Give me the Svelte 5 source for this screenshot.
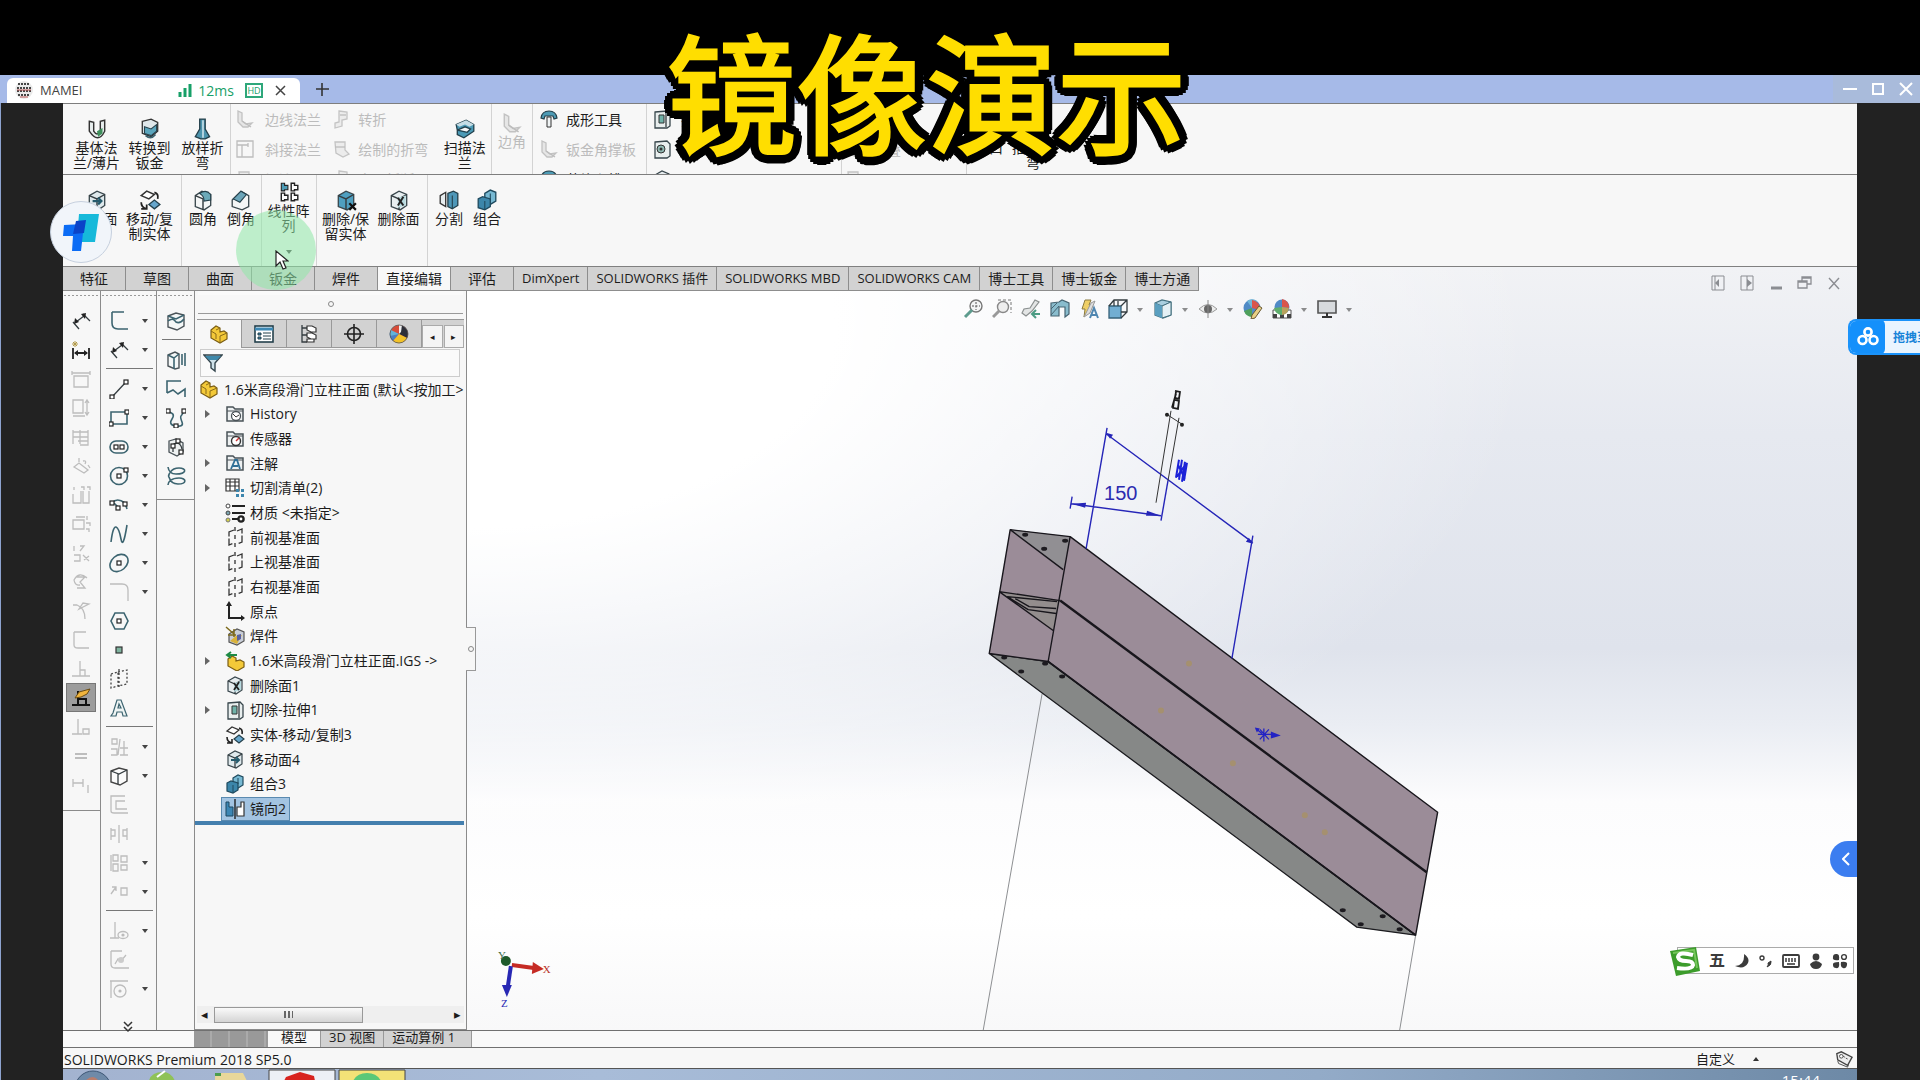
<script>
  const S = 'fill="none" stroke="#343c40" stroke-width="1.3"';
  const G = 'fill="none" stroke="#bdbdbd" stroke-width="1.3"';
  const T = 'fill="none" stroke="#3c6470" stroke-width="1.6"';
  const cube = (f, e = '') =>
    `<path d="M3 6l7-4 7 3v10l-6 4-8-3z" fill="${f}" stroke="#39474d" stroke-width="1.2"/><path d="M3 6l7 3 7-4M10 9v10" ${S}/>${e}`;
  const folder = (e) =>
    `<path d="M2 17V3h6l2 2h8v12z" fill="#eef1f2" stroke="#4a5358" stroke-width="1.5"/><path d="M2 7h16" stroke="#4a5358"/>${e}`;
  const sq = (x, y) => `<rect x="${x - 2}" y="${y - 2}" width="4" height="4" fill="#fff" stroke="#222" stroke-width="1.2"/>`;

  const art = {
    bend: `<path d="M3 3l4 1v8q3 5 6 0V3l4-1v10q-6 12-14 0z" fill="#e8eeee" stroke="#333" stroke-width="1.3"/><path d="M10 12l5-3v5l-4 3z" fill="#3f8f5c"/>`,
    convert: `<path d="M3 3l8-2 6 3v8l-6 5-8-3z" fill="#dfe7ea" stroke="#333" stroke-width="1.2"/><path d="M5 8l6 2 5-4v6l-5 4-6-2z" fill="#5ba6bd" stroke="#27414c"/><path d="M6 16q5 4 9-1" ${T}/>`,
    loft: `<path d="M7 1h5v9l4 7-4 2H8l-5-2 4-7z" fill="#4d94ad" stroke="#24404b" stroke-width="1.2"/><path d="M10 2v16" stroke="#cfe6ee" stroke-width="1.4"/>`,
    sweep: `<path d="M2 6l9-4 7 4v6l-9 6-6-3v-4l9 2 3-3-5-2-7 3z" fill="#4b9ab6" stroke="#22404c" stroke-width="1.2"/><path d="M2 6l9-4 7 4-4 2-4-2-5 2z" fill="#c6dde5"/>`,
    gflange: `<path d="M3 2l4 2v8l4 3 6-1-4 4H8l-5-5z" fill="#e6e6e6" stroke="#c2c2c2" stroke-width="1.3"/><path d="M7 12l9 6" ${G}/>`,
    gmiter: `<path d="M2 2h16v16H2zM2 6h11M7 6v12M13 4v4" ${G}/>`,
    gjog: `<path d="M8 2l8 1v7l-5 1v6l-7 2v-5l4-1z" fill="#ececec" stroke="#c4c4c4" stroke-width="1.3"/><path d="M9 6h6" ${G}/>`,
    gbend: `<path d="M4 3h10v8l4 4-6 3-7-4z" fill="#ececec" stroke="#c4c4c4" stroke-width="1.3"/><path d="M4 8h10" ${G}/>`,
    form: `<path d="M2 9q1-7 8-7t8 7l-3 1-1-3H6l-1 3z" fill="#4d9bb5" stroke="#24404b" stroke-width="1.2"/><path d="M8 8h4v10H8z" fill="#f0f4f5" stroke="#333"/>`,
    vent: cube('#e7edef', '<circle cx="12" cy="11" r="3" fill="#61a1a6" stroke="#333"/>'),
    cut: `<path d="M3 3l12-1 3 3v12l-3 2H3z" fill="#e8eeee" stroke="#39474d" stroke-width="1.3"/><path d="M14 3v15" ${S}/><path d="M7 6h5v8H7z" fill="#6fb2a9" stroke="#333"/>`,
    hole: `<path d="M3 3l12-1 3 3v12l-3 2H3z" fill="#e8eeee" stroke="#39474d" stroke-width="1.3"/><circle cx="9" cy="10" r="4" fill="#8fb8b2" stroke="#333"/><circle cx="9" cy="10" r="1.5" fill="#333"/>`,
    movef: cube('#dfe9ec', '<path d="M6 11h8m-3-3l3 3-3 3" fill="none" stroke="#245a6c" stroke-width="2"/>'),
    moveb: `<path d="M2 6l5-4 7 3-5 4z" fill="#fff" stroke="#333" stroke-width="1.3"/><path d="M9 14l5-4 5 4-5 4z" fill="#66a6cc" stroke="#24404b" stroke-width="1.2"/><path d="M14 3q4 1 3 6M2 12q0 5 5 6M2 18h5v-4" fill="none" stroke="#222" stroke-width="1.6"/>`,
    fillet: `<path d="M3 6l6-4 8 3v10l-6 4-8-3z" fill="#f4f6f6" stroke="#39474d" stroke-width="1.2"/><path d="M3 6l7 3v10" ${S}/><path d="M7 4q6-4 10 1v5l-6 1q0-5-4-7z" fill="#6baab9" stroke="#24404b"/>`,
    chamfer: `<path d="M2 10l8-8 7 4v10l-6 3-9-3z" fill="#f4f6f6" stroke="#39474d" stroke-width="1.2"/><path d="M3 9l7-7 5 3-6 7z" fill="#6ba5b9" stroke="#24404b"/>`,
    pattern: `<path d="M3 2h3v2h3v4H6v1H3z" fill="#4d9bb5" stroke="#222"/><path d="M12 2h3v2h3v4h-3v1h-3zM3 11h3v2h3v4H6v1H3zM12 11h3v2h3v4h-3v1h-3z" fill="#fff" stroke="#222" stroke-width="1.3"/>`,
    delbody: cube('#4f9fc0', '<path d="M13 13l6 6m0-6l-6 6" stroke="#111" stroke-width="2"/>'),
    delface: cube('#e7eef0', '<path d="M9 8l7-2v9l-7 2z" fill="#b7dadf"/><path d="M9 8l5 7m0-8l-5 8" stroke="#222" stroke-width="1.8"/>'),
    split: `<path d="M2 6l5-3v13l-5-3z" fill="#e7edef" stroke="#333" stroke-width="1.2"/><path d="M9 4l5-2 4 2v11l-5 3-4-2z" fill="#4e97b8" stroke="#24404b" stroke-width="1.2"/><path d="M13 6v12" stroke="#24404b"/>`,
    combine: `<path d="M8 4l5-3 5 2v8l-5 3-5-2z" fill="#77b9d3" stroke="#1f4a5e" stroke-width="1.2"/><path d="M2 9l4-2 7 2v7l-5 3-6-2z" fill="#3c86aa" stroke="#1f4a5e" stroke-width="1.2"/><path d="M8 11v8M13 4v6" stroke="#1f4a5e"/>`,
    // dimension and relation tools
    dim: `<path d="M2 11l6 7M12 3l7 7M5 11l8-6" ${S}/><path d="M3 13l1-6 4 4zM15 2l-5 1 4 5z" fill="#222"/>`,
    autodim: `<path d="M2 8v11M18 8v11M4 13h12" fill="none" stroke="#222" stroke-width="1.8"/><path d="M3 13l4-3v6zM17 13l-4-3v6z" fill="#222"/><path d="M4 1v6M1 4h6M2 2l4 4M6 2L2 6" stroke="#b39b4a"/>`,
    g1: `<path d="M1 2v4M19 2v4M1 4h18M3 7h14v11H3z" ${G}/>`,
    g2: `<path d="M2 2h10v13H2zM2 18h12M16 3v13M14 5l2-3 2 3M14 14l2 3 2-3" ${G}/>`,
    g3: `<path d="M2 3v14M9 3v14M17 3v11M2 5h15M2 10h15M7 14h10v4H9" ${G}/>`,
    g4: `<path d="M3 11l5-4 9 7-4 3zM8 2v4M12 5q4-1 2 3M17 9l2 3" ${G}/>`,
    g5: `<path d="M2 9v9h8V6M12 6v12h6V6M3 2v3M10 2h3v3M16 2h3v3" ${G}/>`,
    g6: `<path d="M2 6h11v9H2zM5 3h9M16 2v4M15 9h4v3M15 15h3v3" ${G}/>`,
    g7: `<path d="M3 3v5M9 3h4l-4 5M3 12h6v6H3M12 12l6 6m0-5l-5 4" ${G}/>`,
    g8: `<path d="M16 6q-8-7-13 2 1 6 6 5M6 5h8l-5 5 5 6H6" ${G}/>`,
    g9: `<path d="M2 4h4q8 3 8 14M18 3L8 8l4-6z" ${G}/>`,
    g10: `<path d="M3 2h12M3 2v13q0 3 4 3h11" ${G}/>`,
    g11: `<path d="M9 2v15M1 17h18M9 11h5v6" ${G}/>`,
    g12: `<path d="M7 2v15M1 17h10M12 12h6v5h-6z" ${G}/>`,
    gEq: `<path d="M4 8h12M4 12h12" stroke="#aaa" stroke-width="1.6"/>`,
    gH: `<path d="M2 4v8M12 4v8M2 8h10M17 10v8" ${G}/>`,
    active: `<path d="M1 17h18M7 3v14M8 11h7v6" fill="none" stroke="#111" stroke-width="2"/><path d="M19 1L8 4 4 10l6-1 6-3z" fill="#f0b43c" stroke="#6b4c12"/>`,
    // sketch tools
    sk: `<path d="M3 1v11q0 6 6 6h10M3 1h12" ${T}/>`,
    line: `<path d="M3 18L17 3" ${S}/>${sq(3, 18)}${sq(17, 3)}`,
    rect: `<path d="M2 4h16v12H2z" ${T}/>${sq(2, 16)}${sq(18, 4)}`,
    slot: `<rect x="1" y="4" width="18" height="12" rx="6" ${T}/>${sq(7, 10)}${sq(13, 10)}`,
    circle: `<circle cx="10" cy="10" r="8.5" ${T}/>${sq(10, 10)}${sq(17, 4)}`,
    arc: `<path d="M3 8q5-6 13 0M5 8l5 5M16 8l2 6" ${T}/>${sq(3, 8)}${sq(9, 13)}${sq(16, 9)}`,
    spline: `<path d="M2 18Q4 2 7 3t5 12 6-14" ${T}/>`,
    ellipse: `<ellipse cx="10" cy="10" rx="10" ry="7.5" transform="rotate(-40 10 10)" ${T}/>${sq(10, 10)}`,
    gfil: `<path d="M1 2h12q6 0 6 6v11" ${G}/>`,
    poly: `<path d="M6 2h9l4 8-4 8H6l-4-8z" ${T}/>${sq(10, 10)}`,
    point: `<rect x="7" y="7" width="6" height="6" fill="#7fb39f" stroke="#333" stroke-width="1.2"/>`,
    planeD: `<path d="M2 5l7-2v14l-7 2zM9 3l9-2v14l-9 2M10 0v20" fill="none" stroke="#444" stroke-dasharray="2 2" stroke-width="1.3"/>`,
    text: `<path d="M2 18h5l1-4h5l1 4h4L12 2H8L4 15zM9 10l1-4 2 4z" fill="#eef4f4" stroke="#3c6470" stroke-width="1.2"/>`,
    gtrim: `<path d="M3 2h5v5H3zM2 12h6v6H2M11 2l-2 16M15 4v14M11 11h8M11 18h8" ${G}/>`,
    box: `<path d="M2 5l8-3 8 2v11l-7 4-9-3z" fill="#fafafa" stroke="#444" stroke-width="1.4"/><path d="M2 5l8 3 8-4M9 8v10" ${S}/>`,
    goff: `<path d="M16 1H2v15q0 2 3 2h14M16 6H7v8h11" ${G}/>`,
    gmir: `<path d="M10 1v18M2 4v12M2 6h4v6H2M18 4v12M18 6h-4v6h4" ${G}/>`,
    gpat: `<path d="M2 2v16M4 2h5v6H4zM12 3h6v6h-6zM4 11h5v7H4zM12 12h6v5h-6z" ${G}/>`,
    gmove: `<path d="M2 12l5-7M3 5h4v4M12 6h6v7h-6z" ${G}/>`,
    grel: `<path d="M6 1v16M1 17h9" ${G}/><ellipse cx="14" cy="14" rx="5" ry="3.5" ${G}/><circle cx="14" cy="14" r="1.6" fill="#bbb"/>`,
    gfix: `<path d="M2 1h11M2 1v13q0 4 4 4h14M6 14l3-5 3 2 5-6" ${G}/><circle cx="12" cy="10" r="3" fill="#ccc"/>`,
    gsnap: `<path d="M1 2h18M2 2v17" ${G}/><circle cx="11" cy="12" r="6" ${G}/><circle cx="11" cy="12" r="1.6" fill="#bbb"/>`,
    // surface and curve tools
    surf1: `<path d="M2 5l8-3 8 2v11l-7 4-9-3z" fill="#f4f7f7" stroke="#4a5358" stroke-width="1.4"/><path d="M2 10q5-4 8 1 4 2 8-3M2 5l8 3 8-4" ${T}/>`,
    surf2: `<path d="M2 5l7-3 4 2v14l-4 1-7-3z" fill="#f4f7f7" stroke="#4a5358" stroke-width="1.4"/><path d="M2 5l6 3v11M8 8l5-4M16 4v11M19 3v13" ${T}/>`,
    surf3: `<path d="M1 14V2h14M1 14l6-3 5 4 7-5v8" ${T}/>`,
    surf4: `<path d="M2 4q8 1 4 7t4 7 6-4-1-6 3-5" ${T}/>${sq(2, 3)}${sq(18, 3)}${sq(10, 18)}`,
    surf5: `<path d="M3 4l7-2 7 4v9l-6 4-8-4z" fill="#eef1f1" stroke="#4a5358" stroke-width="1.3"/><path d="M6 8q8-5 10 4M7 8v7" ${S}/>${sq(12, 4)}${sq(7, 9)}${sq(15, 15)}`,
    helix: `<path d="M2 1q1 7 8 7c11 0 11-6 3-6-9 0-11 8-10 9M3 11q2 7 9 7c9 0 9-6 1-6-8 0-11 4-11 7" ${T}/>`,
    // tree
    part: `<path d="M2 6l5-4 4 2v4l4-1 3 2v6l-7 4-9-5z" fill="#f3c938" stroke="#7a5d14" stroke-width="1.2"/><path d="M2 7l5 3v5M7 6l4-2M11 12l7-3M11 12v6" fill="none" stroke="#8a6b18"/>`,
    igs: `<path d="M3 8l4-3 4 2v3l4-1 4 2v5l-7 4-9-5z" fill="#f3c938" stroke="#7a5d14" stroke-width="1.2"/><path d="M12 4H3m3-3L2 4l4 3" fill="none" stroke="#1e8a45" stroke-width="2"/>`,
    props: `<rect x="1" y="2" width="18" height="16" fill="#fff" stroke="#24404b" stroke-width="1.6"/><path d="M1 5h18" stroke="#3d89b5" stroke-width="3"/><path d="M4 9h3v2H4zM4 13h3v2H4z" fill="#3d89b5" stroke="#24404b"/><path d="M9 9h8M9 12h8M9 15h8" stroke="#24404b"/>`,
    config: `<path d="M3 1v17h5M3 4h5M3 11h5" ${S}/><path d="M8 2h5l4 2v4h-5l-4-2zM8 9h5l4 2v4h-5l-4-2zM8 15h7v3H8z" fill="#fff" stroke="#333" stroke-width="1.2"/>`,
    target: `<circle cx="10" cy="10" r="6.5" fill="none" stroke="#222" stroke-width="1.6"/><path d="M10 0v20M0 10h20" stroke="#222" stroke-width="1.6"/>`,
    ball: `<circle cx="10" cy="10" r="9" fill="#d84c39"/><path d="M10 10L4 17a9 9 0 0 1-3-9z" fill="#4d7fc0"/><path d="M10 10L2 6a9 9 0 0 0-1 6z" fill="#63b3d8"/><path d="M10 10V1a9 9 0 0 1 8 13z" fill="#2d2f38"/><path d="M10 10V1h3l-1 7z" fill="#eee"/><path d="M10 10l8 4a9 9 0 0 1-14 3z" fill="#f2c228"/><circle cx="10" cy="10" r="9" fill="none" stroke="#555" stroke-width=".8"/>`,
    filter: `<path d="M1 2h18l-7 8v8l-4-3v-5z" fill="#cfe2ea" stroke="#33454d" stroke-width="1.4"/><path d="M2 3h16l-4 4H6z" fill="#3f89ab"/>`,
    hist: folder('<circle cx="11" cy="12" r="4.5" fill="#fff" stroke="#4a5358" stroke-width="1.3"/><path d="M8 10l3 3 3-2" fill="none" stroke="#333"/>'),
    sensor: folder('<circle cx="11" cy="12" r="4.5" fill="#fff" stroke="#333" stroke-width="1.4"/><path d="M11 12l3-3" stroke="#c33" stroke-width="1.5"/>'),
    annot: folder('<path d="M6 16l4-9h2l3 9M8 13h5" fill="none" stroke="#2f6f96" stroke-width="1.8"/>'),
    cutlist: `<path d="M1 1h13v12H1zM1 4h13M1 8h13M5 1v12M10 1v12" fill="#fff" stroke="#333" stroke-width="1.2"/><path d="M11 11h3v3h-3zM16 11h3v3h-3zM11 16h3v3h-3zM16 16h3v3h-3z" fill="#3d86ad"/>`,
    material: `<circle cx="3" cy="3" r="2" fill="#fff" stroke="#444"/><circle cx="3" cy="10" r="2" fill="#7ba5b0" stroke="#444"/><circle cx="3" cy="17" r="2" fill="#d3d14b" stroke="#777"/><path d="M7 3h13M7 10h13M7 16h6" stroke="#222" stroke-width="1.8"/><circle cx="16" cy="16" r="2.6" fill="#fff" stroke="#222" stroke-width="2.4"/>`,
    plane: `<path d="M9 3L4 5v13l5-2M12 4l5-2v13l-5 2" fill="none" stroke="#333" stroke-width="1.3" stroke-dasharray="10 2"/><path d="M10 0v4M10 8v4M10 16v4" fill="none" stroke="#333" stroke-width="1.3"/>`,
    origin: `<path d="M4 2v15h14" fill="none" stroke="#222" stroke-width="2"/><path d="M4 0l3 5H1zM20 17l-4-3v6z" fill="#222"/>`,
    weld: `<path d="M4 8l8-5 7 3v9l-7 4-8-3z" fill="#c9ced8" stroke="#555" stroke-width="1.2"/><path d="M1 1l8 7M9 3v8M3 9h8" stroke="#7d6a1b" stroke-width="1.5"/><path d="M5 15l7 3 5-9-6 1z" fill="#d9b23a"/><path d="M12 9l4-1v5l-4 2z" fill="#5a62a0"/>`,
    mirror: `<path d="M1 3h3v5h4v9H1z" fill="#3c86b4" stroke="#1c4761"/><path d="M10 0v20" stroke="#222" stroke-width="1.4"/><path d="M19 3h-3v5h-4v9h7z" fill="#fff" stroke="#333" stroke-width="1.2"/>`,
    // view tools
    zoomfit: `<circle cx="13" cy="7" r="6" fill="#f4f6f7" stroke="#777" stroke-width="1.4"/><path d="M13 3v8M9 7h8" stroke="#555" stroke-dasharray="2 1.5"/><path d="M9 11l-7 7" stroke="#5e9c8e" stroke-width="3"/>`,
    zoomarea: `<path d="M6 1h13v13" fill="none" stroke="#777" stroke-dasharray="3 2"/><circle cx="11" cy="8" r="5.5" fill="#eee" stroke="#888" stroke-width="1.4"/><path d="M7 12l-6 6" stroke="#999" stroke-width="3"/>`,
    prev: `<path d="M14 1l4 2-7 9-6 5-4-3 2-4 6-1z" fill="#e3e5e5" stroke="#8a8f8f" stroke-width="1.2"/><path d="M19 15h-7m3-4l-4 4 4 4" fill="none" stroke="#4c9c84" stroke-width="2"/>`,
    section: `<path d="M1 4l8-1 3-2 7 3v11l-4 3V8H9v9H1z" fill="#89bccd" stroke="#466472" stroke-width="1.2"/><path d="M1 10l6-6M1 16l8-9" stroke="#466472"/>`,
    annview: `<path d="M6 1h6l-2 5 4 1-9 11 1-8H3z" fill="#efcf66" stroke="#8a7a40"/><path d="M12 4l4-2-5 12-6 4z" fill="#ddd" stroke="#999"/><path d="M11 19l4-10 4 10M12 16h6" fill="none" stroke="#4f86b0" stroke-width="2"/>`,
    orient: `<path d="M1 7h12v12H1z" fill="#72aed2" stroke="#36627a" stroke-width="1.3"/><path d="M1 7l5-6h13v12l-6 6M13 7l6-6M6 1v6M13 13h6M10 2v5" ${S}/>`,
    display: `<path d="M2 4l7-3 9 2v13l-8 3-8-3z" fill="#a9cfe0" stroke="#44707f" stroke-width="1.2"/><path d="M2 4l7 3v12M9 7l9-4" fill="none" stroke="#44707f"/><path d="M9 7l9-4v13l-9 3z" fill="#e4f0f5" stroke="#44707f"/><path d="M2 4l7 3v12l-7-3z" fill="#5a9fc0"/>`,
    eye: `<path d="M1 10q9-9 18 0-9 8-18 0z" fill="#eceded" stroke="#9a9a9a"/><circle cx="10" cy="10" r="4" fill="#666"/><path d="M10 1v18" stroke="#888"/>`,
    appear: `<circle cx="9" cy="9" r="8.5" fill="#4f8ac6"/><path d="M9 9L4 2a9 9 0 0 1 10 0z" fill="#71b7d8"/><path d="M9 9V1a9 9 0 0 1 8 10z" fill="#d9564c"/><path d="M9 9l-8 3a9 9 0 0 0 8 6z" fill="#4fa05c"/><path d="M19 9l-7 10-4 1 1-4 7-9z" fill="#e8cf85" stroke="#6b5a33"/>`,
    scene: `<path d="M1 11h18v8H1z" fill="#fff" stroke="#555"/><path d="M1 15h4v4H1zM8 15h4v4H8zM15 15h4v4h-4z" fill="#444"/><circle cx="10" cy="8" r="7.5" fill="#4f8ac6"/><path d="M10 8V0a8 8 0 0 1 7 9z" fill="#d9564c"/><path d="M10 8l-8 1a8 8 0 0 0 8 7z" fill="#5fae6c"/><path d="M10 8v8a8 8 0 0 0 7-7z" fill="#b8a25c"/>`,
    monitor: `<path d="M1 2h18v12H1z" fill="#d7dadd" stroke="#555" stroke-width="1.6"/><path d="M10 14v4M5 18h10" stroke="#333" stroke-width="2"/>`,
    tag: `<path d="M2 4l5-2 12 6-5 9L3 11z" fill="#eee" stroke="#444" stroke-width="1.5"/><path d="M3 12l1 3 10 4 1-3M7 6l4 2M12 9l2 1" stroke="#444" fill="none"/><circle cx="7" cy="7" r="2" fill="#fff" stroke="#444"/>`,
  };

  const tabs = ['特征', '草图', '曲面', '钣金', '焊件', '直接编辑', '评估', 'DimXpert', 'SOLIDWORKS 插件', 'SOLIDWORKS MBD', 'SOLIDWORKS CAM', '博士工具', '博士钣金', '博士方通'];

  const dims = ['dim', 'autodim', 'g1', 'g2', 'g3', 'g4', 'g5', 'g6', 'g7', 'g8', 'g9', 'g10', 'g11', 'active', 'g12', 'gEq', 'gH'];

  const sketch = [
    [['sk', 1], ['dim', 1]],
    [['line', 1], ['rect', 1], ['slot', 1], ['circle', 1], ['arc', 1], ['spline', 1], ['ellipse', 1], ['gfil', 1], ['poly', 0], ['point', 0], ['planeD', 0], ['text', 0]],
    [['gtrim', 1], ['box', 1], ['goff', 0], ['gmir', 0], ['gpat', 1], ['gmove', 1]],
    [['grel', 1], ['gfix', 0], ['gsnap', 1]],
  ];
  const curves = [['surf1'], ['surf2', 'surf3', 'surf4', 'surf5', 'helix']];

  const tree = [
    ['hist', 'History', 1], ['sensor', '传感器', 0], ['annot', '注解', 1], ['cutlist', '切割清单(2)', 1],
    ['material', '材质 <未指定>', 0], ['plane', '前视基准面', 0], ['plane', '上视基准面', 0], ['plane', '右视基准面', 0],
    ['origin', '原点', 0], ['weld', '焊件', 0], ['igs', '1.6米高段滑门立柱正面.IGS ->', 1], ['delface', '删除面1', 0],
    ['cut', '切除-拉伸1', 1], ['moveb', '实体-移动/复制3', 0], ['movef', '移动面4', 0], ['combine', '组合3', 0], ['mirror', '镜向2', 0],
  ];
  let selected = $state('镜向2');

  const view = [['zoomfit', 0], ['zoomarea', 0], ['prev', 0], ['section', 0], ['annview', 0], ['orient', 1], ['display', 1], ['eye', 1], ['appear', 0], ['scene', 1], ['monitor', 1]];

  const holes = [[1025, 534], [1044, 548], [1065, 540], [1004, 657], [1021, 671], [1045, 663], [1062, 676], [1343, 910], [1361, 924], [1383, 916], [1400, 929]];
  const marks = [[1189, 663], [1161, 710], [1233, 763], [1305, 815], [1325, 832]];
</script>

{#snippet icon(name, size = 20)}
  <svg class="ic" width={size} height={size} viewBox="0 0 20 20" aria-hidden="true">{@html art[name]}</svg>
{/snippet}

{#snippet big(name, lines, cls = '')}
  <button class="big {cls}">
    {@render icon(name, 22)}
    {#each lines as l}<span>{l}</span>{/each}
  </button>
{/snippet}

{#snippet small(name, label, cls = '')}
  <button class="small {cls}">{@render icon(name)}<span>{label}</span></button>
{/snippet}

<div class="page">
  <div class="letterbox"></div>

  <header class="strip">
    <div class="conn">
      <svg class="ic" width="18" height="18" viewBox="0 0 18 18"><circle cx="9" cy="9" r="9" fill="#e9e9e9" /><path d="M3 3h12M2 7h14M2 10h14M3 14h12" stroke="#444" stroke-width="2" stroke-dasharray="2 1" /><path d="M2 9h14M5 16h8" stroke="#b55" /></svg>
      <span class="host">MAMEI</span>
      <svg class="ic" width="14" height="13" viewBox="0 0 14 13"><path d="M2 8v5M7 4v9M12 0v13" stroke="#17a068" stroke-width="3" /></svg>
      <span class="ping">12ms</span>
      <span class="hd">HD</span>
      <button class="plain" aria-label="关闭标签"><svg width="11" height="11" viewBox="0 0 11 11"><path d="M1 1l9 9M10 1l-9 9" stroke="#444" stroke-width="1.5" /></svg></button>
    </div>
    <button class="plain add" aria-label="新建标签"><svg width="13" height="13" viewBox="0 0 13 13"><path d="M6 0v13M0 6h13" stroke="#333" stroke-width="1.6" /></svg></button>
    <div class="win">
      <button class="plain" aria-label="最小化"><svg width="14" height="14" viewBox="0 0 14 14"><path d="M0 7h14" stroke="#fff" stroke-width="2" /></svg></button>
      <button class="plain" aria-label="最大化"><svg width="14" height="14" viewBox="0 0 14 14"><path d="M2 2h10v10H2z" fill="none" stroke="#fff" stroke-width="2" /></svg></button>
      <button class="plain" aria-label="关闭"><svg width="14" height="14" viewBox="0 0 14 14"><path d="M1 1l12 12M13 1L1 13" stroke="#fff" stroke-width="2" /></svg></button>
    </div>
  </header>

  <div class="remote">
    <main class="app">
      <section class="ribbon one">
        <div class="group w168">
          {@render big('bend', ['基体法', '兰/薄片'])}
          {@render big('convert', ['转换到', '钣金'])}
          {@render big('loft', ['放样折', '弯'])}
        </div>
        <div class="group w261">
          <div class="stack w97">
            {@render small('gflange', '边线法兰', 'off')}
            {@render small('gmiter', '斜接法兰', 'off')}
            {@render small('gbend', '褶边', 'off')}
          </div>
          <div class="stack w108">
            {@render small('gjog', '转折', 'off')}
            {@render small('gbend', '绘制的折弯', 'off')}
            {@render small('gjog', '交叉折断', 'off')}
          </div>
          {@render big('sweep', ['扫描法', '兰'])}
        </div>
        <div class="group w41">{@render big('gflange', ['边角'], 'off up')}</div>
        <div class="group w114">
          <div class="stack">
            {@render small('form', '成形工具')}
            {@render small('gflange', '钣金角撑板', 'off')}
            {@render small('form', '薄片和槽口')}
          </div>
        </div>
        <div class="group w195">
          <div class="stack">
            {@render small('cut', '拉伸切除')}
            {@render small('hole', '简单直孔')}
            {@render small('vent', '通风口')}
          </div>
        </div>
        <div class="group w125">
          <div class="stack">
            {@render small('gbend', '展开', 'off')}
            {@render small('gbend', '折叠', 'off')}
            {@render small('gbend', '展平', 'off')}
          </div>
        </div>
        <div class="group last">
          {@render big('cut', ['切口'])}
          {@render big('bend', ['插入折', '弯'])}
        </div>
      </section>

      <section class="ribbon two">
        <div class="group w119">
          {@render big('movef', ['移动面'])}
          {@render big('moveb', ['移动/复', '制实体'])}
        </div>
        <div class="group w80 tight">
          {@render big('fillet', ['圆角'])}
          {@render big('chamfer', ['倒角'])}
        </div>
        <div class="group w55">{@render big('pattern', ['线性阵', '列'], 'up drop')}</div>
        <div class="group w111">
          {@render big('delbody', ['删除/保', '留实体'])}
          {@render big('delface', ['删除面'])}
        </div>
        <div class="group last tight">
          {@render big('split', ['分割'])}
          {@render big('combine', ['组合'])}
        </div>
      </section>

      <div class="stage">
        <div class="tabrow">
          <nav class="tabs">
            {#each tabs as t}<button class:on={t === '直接编辑'} class:latin={/[A-Z]/.test(t)}>{t}</button>{/each}
          </nav>
          <div class="mdi">
            <button class="plain" aria-label="左窗格"><svg width="16" height="16" viewBox="0 0 16 16"><path d="M2 1h12v14H2zM5 1v14" fill="none" stroke="#8b8d92" /><path d="M9 4v8L5 8z" fill="#8b8d92" /></svg></button>
            <button class="plain" aria-label="右窗格"><svg width="16" height="16" viewBox="0 0 16 16"><path d="M2 1h12v14H2zM8 1v14" fill="none" stroke="#8b8d92" /><path d="M8 4v8l5-4z" fill="#8b8d92" /></svg></button>
            <button class="plain" aria-label="最小化文档"><svg width="16" height="16" viewBox="0 0 16 16"><path d="M3 13h11" stroke="#8b8d92" stroke-width="3" /></svg></button>
            <button class="plain" aria-label="还原文档"><svg width="16" height="16" viewBox="0 0 16 16"><path d="M1 6h9v7H1zM5 6V2h9v7h-4M5 3h9M1 7h9" fill="none" stroke="#8b8d92" stroke-width="1.3" /></svg></button>
            <button class="plain" aria-label="关闭文档"><svg width="16" height="16" viewBox="0 0 16 16"><path d="M3 3l10 11M13 3L3 14" stroke="#8b8d92" stroke-width="1.4" /></svg></button>
          </div>
        </div>

        <div class="work">
          <div class="rail"><div class="bar b1">
            {#each dims as d}<button class="tool" class:active={d === 'active'} aria-label={d}>{@render icon(d)}</button>{/each}
          </div></div>
          <div class="rail wide"><div class="bar b2">
            {#each sketch as g}
              <div class="set">
                {#each g as [n, more]}
                  <button class="tool" class:more aria-label={n}>{@render icon(n)}</button>
                {/each}
              </div>
            {/each}
            <button class="tool end" aria-label="更多"><svg width="10" height="12" viewBox="0 0 10 12"><path d="M1 1l4 4 4-4M1 6l4 4 4-4" fill="none" stroke="#333" stroke-width="1.5" /></svg></button>
          </div></div>
          <div class="rail"><div class="bar b3">
            {#each curves as g}
              <div class="set">
                {#each g as n}<button class="tool" aria-label={n}>{@render icon(n)}</button>{/each}
              </div>
            {/each}
          </div></div>

          <aside class="panel">
            <div class="grip"><i></i></div>
            <div class="ptabs">
              <button class="on" aria-label="设计树">{@render icon('part')}</button>
              <button aria-label="属性">{@render icon('props')}</button>
              <button aria-label="配置">{@render icon('config')}</button>
              <button aria-label="尺寸专家">{@render icon('target')}</button>
              <button aria-label="外观">{@render icon('ball')}</button>
              <div class="pager"><button aria-label="向左">◂</button><button aria-label="向右">▸</button></div>
            </div>
            <div class="filter">{@render icon('filter')}<input aria-label="过滤" /></div>
            <ul class="tree">
              <li class="root">{@render icon('part')}<span>1.6米高段滑门立柱正面 (默认&lt;按加工&gt;</span></li>
              {#each tree as [n, label, open]}
                <li>
                  <i class:tri={open}></i>
                  <button class:sel={selected === label} onclick={() => (selected = label)}>{@render icon(n)}<span>{label}</span></button>
                </li>
              {/each}
            </ul>
            <div class="rollback"></div>
            <div class="hscroll"><b>◂</b><div class="track"><div class="thumb"></div></div><b>▸</b></div>
            <div class="splitter"><i></i></div>
          </aside>

          <div class="canvas">
            <svg class="scene" viewBox="467 290 1390 740" preserveAspectRatio="xMidYMid meet" aria-label="模型视图">
              <path d="M1042 693L983 1030M1416 935l-16 95" stroke="#8d8f92" fill="none" />
              <path d="M989 653l59 8 368 274-59-8z" fill="#868887" stroke="#1b1b1f" stroke-width="1.3" />
              <path d="M1010 529l60 7 368 276-22 123-368-274-59-8z" fill="#9b8c98" />
              <path d="M1010 529l60 7-7 33z" fill="#918f93" />
              <path d="M999 591l61 9-7 30z" fill="#938d8d" />
              <g fill="none" stroke="#18161c" stroke-width="1.4" stroke-linejoin="round">
                <path d="M1010 529l60 7-22 125-59-8zM1070 536l368 276-22 123-368-274" />
                <path d="M1010 529l53 40M999 591l61 9M1007 596l50 5M999 591l54 39M1007 596l21 13 28 4M1015 598l14 8 27 2" />
                <path d="M1060 600l367 272" stroke-width="2.4" />
                <path d="M1048 661l368 274" stroke-width="1.8" />
              </g>
              {#each holes as [x, y]}<ellipse cx={x} cy={y} rx="3" ry="2" fill="#1d1b20" />{/each}
              {#each marks as [x, y]}<circle cx={x} cy={y} r="3" fill="#a5906f" />{/each}
              <g fill="none" stroke="#2525b8" stroke-width="1.4">
                <path d="M1107 427l-21 121M1106 433l147 109M1253 535l-21 123M1071 503l90 12M1072 496l-2 12" />
                <path d="M1168 480l-7 40" />
              </g>
              <path d="M1106 432l7 2-3 4zM1253 543l-7-2 3-4zM1072 503l14-1-1 5zM1161 515l-14-5-1 5z" fill="#2525b8" />
              <path d="M1171 410l-15 92M1179 417l-11 63M1166 413l17 11" fill="none" stroke="#333" />
              <circle cx="1167" cy="414" r="2" fill="#222" /><circle cx="1182" cy="424" r="2" fill="#222" />
              <path d="M1175 390l5 1-1 7-4-1 1-6m-1 8l4 1-1 8-5-1 1-7m2-7l-4 14" fill="none" stroke="#1c1c1c" stroke-width="1.8" />
              <path d="M1179 459l-3 18M1182 459l-3 20M1185 461l-3 20M1187 462l-3 18M1177 476l9-13M1178 464l7 14" fill="none" stroke="#1c22d8" stroke-width="2" />
              <text class="dimtext" x="1104" y="499">150</text>
              <path d="M1258 734h14M1264 728v13M1260 729l9 10M1269 729l-9 10M1256 728l6 5" stroke="#2222c4" stroke-width="1.3" />
              <path d="M1271 731l10 4-10 3zM1255 727l5 1-3 4z" fill="#2222c4" />
              <g class="triad">
                <path d="M511 965l22 3" stroke="#c52b24" stroke-width="4" /><path d="M532 962l11 7-12 5z" fill="#c52b24" />
                <path d="M510 966l-3 20" stroke="#2828b4" stroke-width="4" /><path d="M501 985h10l-5 12z" fill="#2828b4" />
                <circle cx="505" cy="961" r="5" fill="#1e5a2b" />
                <text x="542" y="973" fill="#b8322c">X</text><text x="500" y="1007" fill="#2828b4">Z</text><text x="497" y="959" fill="#3a6b45">Y</text>
              </g>
            </svg>
            <div class="headsup">
              {#each view as [n, more]}<button class="plain" class:more aria-label={n}>{@render icon(n)}</button>{/each}
            </div>
            <button class="expand" aria-label="展开侧栏"><svg width="8" height="14" viewBox="0 0 8 14"><path d="M7 1L1 7l6 6" fill="none" stroke="#fff" stroke-width="2" /></svg></button>
            <div class="ime">
              <svg class="sogou" width="32" height="30" viewBox="0 0 32 30"><path d="M1 5l26-4 4 24-24 5z" fill="#3c9c2b" /><path d="M4 7l21-3 3 18" fill="none" stroke="#74c55a" stroke-width="2" /><path d="M24 9q-14-4-15 2 1 4 8 4 7 0 7 4-1 5-16 3" fill="none" stroke="#fff" stroke-width="4" /></svg>
              <span>五</span>
              <svg width="16" height="16" viewBox="0 0 16 16"><path d="M10 1q6 4 4 9-4 7-13 3 10 0 9-12z" fill="#3b3b3b" /></svg>
              <svg width="14" height="16" viewBox="0 0 14 16"><circle cx="3" cy="5" r="2" fill="none" stroke="#3b3b3b" stroke-width="1.4" /><path d="M12 8q1 4-4 6 2-2 1-4z" fill="#3b3b3b" stroke="#3b3b3b" /></svg>
              <svg width="18" height="14" viewBox="0 0 18 14"><rect x="1" y="1" width="16" height="12" rx="1" fill="none" stroke="#3b3b3b" stroke-width="1.8" /><path d="M3 5h12M3 7h12" stroke="#3b3b3b" stroke-width="1.6" stroke-dasharray="2 1" /><path d="M5 10h8" stroke="#3b3b3b" stroke-width="1.6" /></svg>
              <svg width="14" height="16" viewBox="0 0 14 16"><circle cx="7" cy="4" r="3.4" fill="#3b3b3b" /><path d="M1 11q6-6 12 0-1 5-6 5t-6-5z" fill="#3b3b3b" /></svg>
              <svg width="16" height="16" viewBox="0 0 16 16"><path d="M4 1q4-1 3 6-7 1-6-3 0-3 3-3zM1 12q-1-3 6-3 1 7-3 6-3 0-3-3zM9 9q7-1 6 3-1 4-4 3t-2-6z" fill="#3b3b3b" /><circle cx="12" cy="4" r="2.4" fill="none" stroke="#3b3b3b" stroke-width="1.4" /></svg>
            </div>
          </div>
        </div>
      </div>

      <nav class="doctabs">
        <div class="nub"></div>
        <button class="on">模型</button><button>3D 视图</button><button>运动算例 1</button>
      </nav>
      <footer class="status">
        <span>SOLIDWORKS Premium 2018 SP5.0</span>
        <span class="custom">自定义</span><b></b>{@render icon('tag', 18)}
      </footer>
      <div class="taskbar">
        <svg width="354" height="12" viewBox="0 0 354 12" aria-hidden="true">
          <circle cx="30" cy="20" r="18" fill="#6f8aa8" stroke="#3f5876" /><path d="M22 12q8-8 14 0z" fill="#b97d6c" />
          <path d="M86 12q2-9 14-9 8 0 12 9z" fill="#8fc257" /><path d="M94 8l8-6" stroke="#fff" stroke-width="2" />
          <path d="M152 12V4h28l4 8z" fill="#e8d79a" /><path d="M152 4h6v3h-6z" fill="#4c9c4c" />
          <path d="M206 1h66v11h-66z" fill="#edf0f6" stroke="#444" /><path d="M221 12l2-4 14-5 14 4 1 5z" fill="#d8231f" />
          <path d="M276 1h66v11h-66z" fill="#f3e277" stroke="#444" /><path d="M290 12q4-8 14-8t14 8z" fill="#5bc878" />
        </svg>
        <time>15:44</time>
      </div>
    </main>
  </div>

  <div class="float">
    <svg width="38" height="38" viewBox="0 0 38 38"><path d="M17 1h20l-4 28H19l2-15-5-1z" fill="#16b9da" /><path d="M2 12l20-1-3 27H10l1-15H1z" fill="#0b6cf5" /><path d="M14 8l10-1-2 13-11 1z" fill="#0a43c8" /></svg>
  </div>
  <div class="halo"></div>
  <svg class="cursor" width="14" height="20" viewBox="0 0 14 20"><path d="M1 1v15l4-4 3 7 3-1-3-7h5z" fill="#fff" stroke="#222" stroke-width="1.2" /></svg>
  <div class="drag">
    <span><svg width="22" height="20" viewBox="0 0 22 20"><g fill="none" stroke="#fff" stroke-width="2.6"><circle cx="11" cy="5" r="3.6" /><circle cx="5.500" cy="13" r="4" /><circle cx="16.500" cy="13" r="4" /></g></svg></span>
    <em>拖拽至此上传</em>
  </div>
  <h1>镜像演示</h1>
</div>

<style>
  :global(body) { background: #000; overflow: hidden; }
  .page { position: relative; display: flex; flex-direction: column; height: 100vh; overflow: hidden; background: #222; color: #1c1c1c; font: 14px/15px "Open Sans", "Noto Sans CJK SC", sans-serif; }
  .page * { box-sizing: border-box; }
  button { font: inherit; color: inherit; background: none; border: 0; padding: 0; margin: 0; }
  svg { display: block; flex: none; }
  .plain { display: grid; place-items: center; }
  .letterbox { height: 75px; background: #000; flex: none; }

  .strip { display: flex; align-items: stretch; height: 28px; flex: none; background: #a6bae8; }
  .conn { display: flex; align-items: center; width: 293px; margin: 3px 0 0 7px; padding: 0 14px 1px 8px; background: #fff; border-radius: 6px 6px 0 0; font-size: 13px; color: #444; }
  .host { margin: 0 auto 0 7px; }
  .ping { margin-left: 6px; color: #17a068; font-size: 14px; }
  .hd { margin: 0 12px 0 11px; width: 18px; border: 2px solid #2ea77a; color: #17a068; font-size: 9px; line-height: 11px; text-align: center; }
  .add { margin-left: 15px; width: 14px; }
  .win { display: flex; gap: 14px; margin-left: auto; padding: 0 7px 0 10px; background: #a9bbdb; }

  .remote { flex: 1; min-height: 0; padding: 0 63px 0 62px; border-left: 1px solid #8ea3cf; background: #222; }
  .app { display: flex; flex-direction: column; height: 100%; background: #f7f7f7; }
  .ribbon { display: flex; flex: none; overflow: hidden; border-top: 1px solid #7e7e7e; background: #f7f7f7; }
  .one { height: 71px; }
  .two { height: 92px; }
  .group { display: flex; border-right: 1px solid #d3d3d3; padding-left: 7px; flex: none; }
  .last { border: 0; }
  .one .last { padding-left: 0; }
  .one .last .big { width: 44px; }
  .w168 { width: 168px; } .w261 { width: 261px; padding-left: 4px; } .w41 { width: 41px; padding: 0; } .w114 { width: 114px; padding-left: 6px; }
  .w195 { width: 195px; padding-left: 5px; } .w125 { width: 125px; padding-left: 2px; }
  .w119 { width: 119px; } .w80 { width: 80px; } .w55 { width: 55px; padding: 0; } .w111 { width: 111px; padding-left: 2px; }
  .big { display: flex; flex-direction: column; align-items: center; width: 53px; padding-top: 14px; white-space: nowrap; }
  .one .big.up { width: 40px; padding-top: 8px; }
  .two .big.up { padding-top: 6px; }
  .tight { padding-left: 2px; }
  .tight .big { width: 38px; }
  .drop::after { content: ""; margin-top: 17px; border: 3px solid transparent; border-top: 4px solid #444; border-bottom: 0; }
  .stack { display: flex; flex-direction: column; }
  .w97 { width: 97px; } .w108 { width: 108px; }
  .small { display: flex; align-items: center; gap: 9px; height: 30px; flex: none; white-space: nowrap; }
  .w97 .small { gap: 10px; }
  .w108 .small, .w114 .small { gap: 7px; }
  .off { color: #bcbcbc; }

  .stage { display: flex; flex-direction: column; flex: 1; min-height: 0; border-top: 1px solid #808080;
    background: radial-gradient(ellipse 60% 75% at 22% 8%, #fff 35%, transparent 100%), linear-gradient(#f1f2f5 0, #e6e9f0 22%, #dfe3ec 50%, #eaedf3 60%, #fcfcfd 70%, #fff 85%, #f8f8f9 100%); }
  .tabrow { display: flex; align-items: flex-end; height: 24px; flex: none; }
  .tabs { display: flex; height: 24px; border-bottom: 1px solid #8d8d8d; }
  .tabs button { min-width: 63px; padding: 0 8px 1px; background: #d2d2d2; border-right: 1px solid #8d8d8d; white-space: nowrap; }
  .tabs button.latin { font-size: 13px; }
  .tabs button.on { background: #f8f8f8; }
  .mdi { display: flex; gap: 13px; margin-left: auto; margin-right: 15px; }

  .work { display: flex; flex: 1; min-height: 0; }
  .rail { width: 37px; flex: none; background: #f7f7f7; }
  .rail.wide { width: 57px; }
  .bar { display: flex; flex-direction: column; align-items: stretch; padding-top: 15px; border: solid #8b8b8b; border-width: 0 0 1px; background: radial-gradient(circle, #999 1px, transparent 1px) 0 2px / 4px 5px repeat-x; }
  .b1 { padding-bottom: 11px; }
  .b2 { border-width: 0 1px 1px; }
  .b3 { padding-bottom: 9px; }
  .tool { position: relative; display: grid; place-items: center; height: 29px; flex: none; }
  .b1 .tool { width: 30px; margin-left: 3px; }
  .b2 .tool { width: 36px; }
  .b3 .tool { width: 37px; }
  .active { background: #9c9c9c; border: 1px solid #777; }
  .set + .set { border-top: 1px solid #777; margin: 4px 3px 0 5px; padding-top: 5px; }
  .b2 .set + .set .tool { margin-left: -5px; }
  .b3 .set + .set .tool { margin-left: -5px; }
  .more::after { content: ""; position: absolute; left: 41px; top: 13px; border: 3px solid transparent; border-top: 4px solid #444; border-bottom: 0; }
  .b2 .end { width: 54px; height: 37px; padding-top: 10px; }

  .panel { position: relative; display: flex; flex-direction: column; width: 273px; flex: none; background: #f7f7f7; border: 1px solid #8b8b8b; border-top: 0; }
  .grip { height: 23px; margin: 0 3px; border-top: 4px solid #fafafa; border-bottom: 1px solid #9a9a9a; display: grid; place-items: center; }
  .grip i, .splitter i { width: 6px; height: 6px; border: 1px solid #888; border-radius: 50%; }
  .ptabs { display: flex; height: 29px; margin: 5px 2px 0; border-top: 1px solid #999; }
  .ptabs > button { display: grid; place-items: center; width: 45px; background: #d2d2d2; border: solid #999; border-width: 0 1px 1px 0; }
  .ptabs > button.on { background: #f7f7f7; border-bottom: 0; }
  .pager { display: flex; flex: 1; padding-top: 5px; background: #d2d2d2; gap: 1px; }
  .pager button { flex: 1; background: #f4f4f4; border: 1px solid #aaa; font-size: 9px; line-height: 9px; }
  .filter { display: flex; align-items: center; height: 28px; margin: 1px 6px 0 5px; padding-left: 2px; border: 1px solid #ccc; background: #fafafa; }
  .filter input { flex: 1; min-width: 0; border: 0; background: none; outline: 0; }
  .tree { display: grid; grid-auto-rows: 1fr; height: 444px; margin: 0; padding: 0; list-style: none; flex: none; }
  .tree li { display: flex; align-items: center; white-space: nowrap; min-height: 0; }
  .tree .root { gap: 5px; padding-left: 4px; }
  .tree li > i { width: 26px; }
  .tree li > i.tri::before { content: ""; display: block; margin-left: 10px; width: 0; border: 4px solid transparent; border-left: 5px solid #666; border-right: 0; }
  .tree li button { display: flex; align-items: center; gap: 5px; height: 24px; padding: 0 3px; border: 1px solid transparent; }
  .tree li button.sel { background: #a3c4e2; border-color: #5a8ab0; }
  .rollback { height: 4px; margin-right: 2px; background: #447fae; flex: none; }
  .hscroll { display: flex; align-items: center; height: 17px; margin: auto 2px 6px 2px; background: #efefef; }
  .hscroll b { width: 14px; text-align: center; font-size: 13px; font-weight: 400; }
  .track { flex: 1; padding-left: 3px; }
  .thumb { width: 63%; height: 16px; border: 1px solid #999; background: linear-gradient(#fafafa, #d4d4d4); display: grid; place-items: center; }
  .thumb::after { content: ""; width: 9px; height: 7px; background: repeating-linear-gradient(90deg, #666 0 2px, transparent 2px 4px); }
  .splitter { position: absolute; left: 271px; top: 336px; width: 10px; height: 44px; display: grid; place-items: center; background: #f7f7f7; border: 1px solid #999; border-left: 0; z-index: 1; }

  .canvas { position: relative; flex: 1; min-width: 0; }
  .scene { width: 100%; height: 100%; }
  .dimtext { font: 20px "Liberation Sans Narrow", "Liberation Sans", sans-serif; fill: #2b2bb0; }
  .triad text { font: 11px "Liberation Serif", serif; }
  .headsup { position: absolute; top: 8px; left: 0; right: 8px; display: flex; justify-content: center; gap: 9px; }
  .headsup .plain { position: relative; }
  .headsup .more { margin-right: 16px; }
  .headsup .more::after { left: 29px; top: 9px; opacity: .6; }
  .expand { position: absolute; right: 0; bottom: 153px; width: 27px; height: 36px; border-radius: 18px 0 0 18px; background: #3b7df0; display: grid; place-items: center; padding-left: 5px; }
  .ime { position: absolute; right: 3px; bottom: 56px; display: flex; align-items: center; gap: 9px; height: 27px; padding-right: 5px; background: #fff; border: 1px solid #aaa; }
  .ime span { font-size: 16px; font-weight: 700; color: #3b3b3b; }
  .sogou { margin: 0 -1px 0 -9px; }

  .doctabs { display: flex; height: 17px; flex: none; border-top: 1px solid #707070; padding-left: 131px; background: #f9f9f9; font-size: 13px; line-height: 13px; }
  .doctabs button { padding: 0 8px 3px; background: #d2d2d2; border-right: 1px solid #999; white-space: nowrap; }
  .doctabs button.on { padding: 0 13px 3px; background: #f8f8f8; }
  .doctabs button:last-child { padding-right: 16px; }
  .nub { width: 74px; background: repeating-linear-gradient(90deg, #999 0 16px, #aaa 16px 18px); }
  .status { display: flex; align-items: center; height: 21px; flex: none; padding: 2px 4px 0 1px; border-top: 1px solid #707070; background: #f7f7f7; }
  .custom { margin-left: auto; margin-right: 18px; font-size: 13px; }
  .status b { margin-right: 76px; border: 3px solid transparent; border-bottom: 4px solid #333; border-top: 0; }
  .taskbar { display: flex; justify-content: space-between; height: 12px; flex: none; overflow: hidden; border-top: 1px solid #555; background: linear-gradient(90deg, #a3b3d0, #a8bcd8 30%, #93abc8 70%, #6d89a6); }
  .taskbar time { margin: 3px 37px 0 0; color: #fff; font-size: 15px; line-height: 17px; }

  .float { position: absolute; left: 50px; top: 201px; width: 62px; height: 62px; border-radius: 50%; display: grid; place-items: center; background: #f1f5fa; border: 1px solid #c6d0de; }
  .halo { position: absolute; left: 236px; top: 210px; width: 80px; height: 80px; border-radius: 50%; background: #8fe8a8; opacity: .55; }
  .cursor { position: absolute; left: 275px; top: 250px; }
  .drag { position: absolute; right: 0; top: 319px; width: 72px; height: 36px; display: flex; align-items: center; overflow: hidden; border: 2px solid #1b93fa; border-right: 0; border-radius: 8px 0 0 8px; background: #eaf5ff; }
  .drag span { width: 35px; height: 36px; flex: none; display: grid; place-items: center; background: #1490fb; border-radius: 0 6px 6px 0; }
  .drag em { margin-left: 8px; font-style: normal; font-size: 12px; font-weight: 700; color: #1784d8; white-space: nowrap; }
  h1 { position: absolute; left: 0; right: 67px; top: 0; margin: 0; text-align: center; font: 400 130px/174px "Noto Sans CJK SC", sans-serif; color: #ffde00; -webkit-text-stroke: 3px #ffde00; pointer-events: none;
    text-shadow: 10px 0 #000, 9px 4px #000, 7px 7px #000, 4px 9px #000, 0 10px #000, -4px 9px #000, -7px 7px #000, -9px 4px #000, -10px 0 #000, -9px -4px #000, -7px -7px #000, -4px -9px #000, 0 -10px #000, 4px -9px #000, 7px -7px #000, 9px -4px #000, 5px 5px #000, -5px 5px #000, 5px -5px #000, -5px -5px #000; }
</style>
